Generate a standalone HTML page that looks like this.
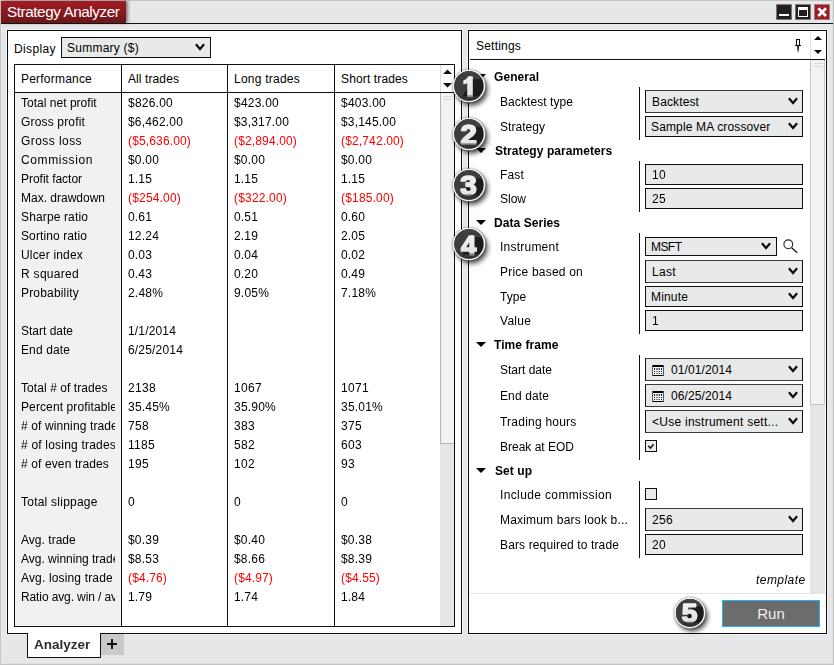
<!DOCTYPE html>
<html><head><meta charset="utf-8"><title>Strategy Analyzer</title>
<style>
*{box-sizing:border-box;margin:0;padding:0}
html,body{width:834px;height:665px;overflow:hidden}
body{position:relative;background:#e6e7e8;font-family:"Liberation Sans",sans-serif;font-size:12px;color:#000;line-height:14px}
.a{position:absolute}
.t{position:absolute;white-space:nowrap;height:14px;line-height:14px}
.b{font-weight:bold}
.r{color:#ff0000}
.g{will-change:transform}
.cb{position:absolute;background:#e8eae9;border:1px solid #0e0e0e}
.cb.s{border-top-color:#3a3a3a;border-bottom-color:#3a3a3a}
.cb span{position:absolute;left:6px;white-space:nowrap}
.vl{position:absolute;left:639px;width:1px;background:#111}
.tri{position:absolute;width:0;height:0;border-left:5px solid transparent;border-right:5px solid transparent;border-top:5px solid #000}
.chev{position:absolute;width:10px;height:8px}
.badge{position:absolute;width:33px;height:33px}
</style></head><body>

<div class="a" style="left:0;top:0;width:834px;height:1px;background:#c4c4c4"></div>
<div class="a" style="left:0;top:0;width:1px;height:665px;background:#c4c4c4"></div>
<div class="a" style="left:0;top:663px;width:834px;height:1px;background:#dcdddd"></div>
<div class="a" style="left:832px;top:0;width:1px;height:665px;background:#dedfdf"></div>
<div class="a" style="left:0;top:664px;width:834px;height:1px;background:#c5c5c5"></div>
<div class="a" style="left:833px;top:0;width:1px;height:665px;background:#c5c5c5"></div>
<div class="a" style="left:1px;top:1px;width:125px;height:22px;background:linear-gradient(#a51c24,#6a171b);box-shadow:2px 0 3px rgba(0,0,0,.45)"></div>
<div class="t" style="left:7px;top:3px;height:18px;line-height:18px;font-size:15.3px;letter-spacing:-0.44px;color:#fff">Strategy Analyzer</div>
<div class="a" style="left:1px;top:23px;width:832px;height:1px;background:#111"></div>
<div class="a" style="left:776px;top:4px;width:16px;height:16px;background:#231f20;border:1px solid #7b7b7b"></div>
<div class="a" style="left:779px;top:14px;width:10px;height:2px;background:#fff"></div>
<div class="a" style="left:795px;top:4px;width:16px;height:16px;background:#231f20;border:1px solid #7b7b7b"></div>
<div class="a" style="left:798px;top:7px;width:10px;height:10px;border:1px solid #fff;border-top-width:3px"></div>
<div class="a" style="left:814px;top:4px;width:16px;height:16px;background:#a21b20;border:1px solid #9a7f80"></div>
<svg class="a" style="left:814px;top:4px" width="16" height="16" viewBox="0 0 16 16"><path d="M4.3 4.3 L12 12 M12 4.3 L4.3 12" stroke="#fff" stroke-width="2.7" fill="none"/></svg>
<div class="a" style="left:7px;top:30px;width:455px;height:604px;background:#fff;border:1px solid #0c0c0c;box-shadow:0 0 0 1px rgba(255,255,255,.55)"></div>
<div class="t" style="left:14px;top:42px;letter-spacing:0.379px;">Display</div>
<div class="cb" style="left:61px;top:37px;width:150px;height:21px"><span style="left:5px;top:3px;line-height:14px;letter-spacing:0.242px;">Summary ($)</span></div>
<svg class="chev" style="left:195px;top:43px" viewBox="0 0 10 8"><path d="M0.9 1.2 L5 6 L9.1 1.2" stroke="#0c0c0c" stroke-width="2.2" fill="none"/></svg>
<div class="a" style="left:14px;top:64px;width:441px;height:563px;border:1px solid #111;background:#fff"></div>
<div class="a" style="left:15px;top:93px;width:106px;height:533px;background:#f0f1f1"></div>
<div class="a" style="left:15px;top:92px;width:439px;height:1px;background:#111"></div>
<div class="a" style="left:121px;top:65px;width:1px;height:561px;background:#111"></div>
<div class="a" style="left:227px;top:65px;width:1px;height:561px;background:#111"></div>
<div class="a" style="left:334px;top:65px;width:1px;height:561px;background:#111"></div>
<div class="a" style="left:440px;top:65px;width:1px;height:27px;background:#dcdcdc"></div>
<div class="a" style="left:440px;top:93px;width:14px;height:533px;background:#e6e6e6"></div>
<div class="a" style="left:440px;top:93px;width:14px;height:351px;background:#f3f3f3;border-left:1px solid #b4b4b4;border-bottom:1px solid #b4b4b4"></div>
<div class="a" style="left:443px;top:96px;width:9px;height:1px;background:#dadada"></div>
<div class="a" style="left:443px;top:99px;width:9px;height:1px;background:#dadada"></div>
<svg class="a" style="left:443px;top:69px" width="9" height="20" viewBox="0 0 9 20"><path d="M0 5 L4.5 0.5 L9 5 Z M0 14 L9 14 L4.5 18.5 Z" fill="#111"/></svg>
<div class="t" style="left:21px;top:72px;letter-spacing:0.210px;">Performance</div>
<div class="t" style="left:128px;top:72px;letter-spacing:0.098px;">All trades</div>
<div class="t" style="left:234px;top:72px;letter-spacing:0.238px;">Long trades</div>
<div class="t" style="left:341px;top:72px;letter-spacing:0.136px;">Short trades</div>
<div class="a" style="left:27px;top:633px;width:74px;height:25px;background:#fff;border:1px solid #111;border-top:none"></div>
<div class="a" style="left:101px;top:634px;width:23px;height:21px;background:#c9c9c9"></div>
<div class="a" style="left:107px;top:643px;width:10px;height:2px;background:#111"></div>
<div class="a" style="left:111px;top:639px;width:2px;height:10px;background:#111"></div>
<div class="a" style="left:468px;top:30px;width:359px;height:604px;background:#fff;border:1px solid #0c0c0c;box-shadow:0 0 0 1px rgba(255,255,255,.55)"></div>
<div class="t" style="left:476px;top:39px;letter-spacing:0.205px;">Settings</div>
<div class="a" style="left:470px;top:59px;width:355px;height:1px;background:#111"></div>
<svg class="a" style="left:794px;top:38px" width="9" height="16" viewBox="0 0 9 16"><defs><linearGradient id="png" x1="0" y1="0" x2="0" y2="1"><stop offset="0" stop-color="#000"/><stop offset="0.45" stop-color="#222"/><stop offset="1" stop-color="#000" stop-opacity="0.08"/></linearGradient></defs><rect x="2.5" y="1.5" width="3" height="6" fill="#fff" stroke="#0a0a0a" stroke-width="1"/><rect x="1" y="7" width="6" height="1" fill="#0a0a0a"/><rect x="3.3" y="8" width="1.6" height="6.8" fill="url(#png)"/></svg>
<div class="a" style="left:810px;top:31px;width:1px;height:28px;background:#e2e2e2"></div>
<svg class="a" style="left:814px;top:36px" width="8" height="18" viewBox="0 0 8 18"><path d="M0 4 L4 0 L8 4 Z M0 14 L8 14 L4 18 Z" fill="#0a0a0a"/></svg>
<div class="a" style="left:810px;top:60px;width:15px;height:533px;background:#e5e5e5"></div>
<div class="a" style="left:810px;top:60px;width:15px;height:345px;background:#f2f2f2;border:1px solid #c4c4c4;border-top:none"></div>
<div class="a" style="left:814px;top:63px;width:9px;height:1px;background:#dadada"></div>
<div class="a" style="left:814px;top:66px;width:9px;height:1px;background:#dadada"></div>
<div class="tri" style="left:475.5px;top:74px"></div>
<div class="cb s" style="left:645px;top:90px;width:158px;height:23px"><span style="left:6px;top:4px;line-height:14px;letter-spacing:0.123px;">Backtest</span></div>
<svg class="chev" style="left:788px;top:97px" viewBox="0 0 10 8"><path d="M0.9 1.2 L5 6 L9.1 1.2" stroke="#0c0c0c" stroke-width="2.2" fill="none"/></svg>
<div class="cb" style="left:645px;top:116px;width:158px;height:21px"><span style="left:5px;top:3px;line-height:14px;letter-spacing:0.144px;">Sample MA crossover</span></div>
<svg class="chev" style="left:788px;top:122px" viewBox="0 0 10 8"><path d="M0.9 1.2 L5 6 L9.1 1.2" stroke="#0c0c0c" stroke-width="2.2" fill="none"/></svg>
<div class="tri" style="left:475.5px;top:148px"></div>
<div class="cb" style="left:645px;top:164px;width:158px;height:21px"></div>
<div class="cb" style="left:645px;top:188px;width:158px;height:21px"></div>
<div class="tri" style="left:475.5px;top:220px"></div>
<div class="cb" style="left:645px;top:237px;width:132px;height:19px"><span style="left:5px;top:2px;line-height:14px;letter-spacing:-0.565px;">MSFT</span></div>
<svg class="chev" style="left:761px;top:242px" viewBox="0 0 10 8"><path d="M0.9 1.2 L5 6 L9.1 1.2" stroke="#0c0c0c" stroke-width="2.2" fill="none"/></svg>
<svg class="a" style="left:782px;top:238px" width="17" height="16" viewBox="0 0 17 16"><circle cx="6.3" cy="6.3" r="4.4" fill="none" stroke="#222" stroke-width="1.1"/><path d="M9.6 9.7 L15.2 14.7" stroke="#222" stroke-width="1.45"/></svg>
<div class="cb s" style="left:645px;top:260px;width:158px;height:23px"><span style="left:6px;top:4px;line-height:14px;letter-spacing:0.330px;">Last</span></div>
<svg class="chev" style="left:788px;top:267px" viewBox="0 0 10 8"><path d="M0.9 1.2 L5 6 L9.1 1.2" stroke="#0c0c0c" stroke-width="2.2" fill="none"/></svg>
<div class="cb" style="left:645px;top:286px;width:158px;height:21px"><span style="left:5px;top:3px;line-height:14px;letter-spacing:0.164px;">Minute</span></div>
<svg class="chev" style="left:788px;top:292px" viewBox="0 0 10 8"><path d="M0.9 1.2 L5 6 L9.1 1.2" stroke="#0c0c0c" stroke-width="2.2" fill="none"/></svg>
<div class="cb" style="left:645px;top:310px;width:158px;height:21px"></div>
<div class="tri" style="left:475.5px;top:342px"></div>
<div class="cb s" style="left:645px;top:358px;width:158px;height:23px"><span style="left:25px;top:4px;line-height:14px;letter-spacing:0.094px;">01/01/2014</span><svg style="position:absolute;left:6px;top:6px" width="12" height="11" viewBox="0 0 12 11"><rect x="0" y="0" width="12" height="11" fill="#fbfbfb"/><rect x="0" y="0" width="12" height="2" fill="#000"/><rect x="0" y="10" width="12" height="1" fill="#000"/><rect x="0" y="0" width="1" height="11" fill="#6b5340"/><rect x="11" y="0" width="1" height="11" fill="#3d5a8c"/><rect x="2.0" y="3" width="1.1" height="2" fill="#241a1a"/><rect x="4.45" y="3" width="1.1" height="2" fill="#241a1a"/><rect x="6.7" y="3" width="1.1" height="2" fill="#241a1a"/><rect x="9.0" y="3" width="1.1" height="2" fill="#241a1a"/><rect x="2.0" y="6" width="1.1" height="1" fill="#241a1a"/><rect x="4.45" y="6" width="1.1" height="1" fill="#241a1a"/><rect x="6.7" y="6" width="1.1" height="1" fill="#241a1a"/><rect x="9.0" y="6" width="1.1" height="1" fill="#241a1a"/><rect x="2.0" y="8" width="1.1" height="1" fill="#241a1a"/><rect x="4.45" y="8" width="1.1" height="1" fill="#241a1a"/><rect x="6.7" y="8" width="1.1" height="1" fill="#241a1a"/><rect x="9.0" y="8" width="1.1" height="1" fill="#241a1a"/></svg></div>
<svg class="chev" style="left:788px;top:365px" viewBox="0 0 10 8"><path d="M0.9 1.2 L5 6 L9.1 1.2" stroke="#0c0c0c" stroke-width="2.2" fill="none"/></svg>
<div class="cb s" style="left:645px;top:384px;width:158px;height:23px"><span style="left:25px;top:4px;line-height:14px;letter-spacing:0.094px;">06/25/2014</span><svg style="position:absolute;left:6px;top:6px" width="12" height="11" viewBox="0 0 12 11"><rect x="0" y="0" width="12" height="11" fill="#fbfbfb"/><rect x="0" y="0" width="12" height="2" fill="#000"/><rect x="0" y="10" width="12" height="1" fill="#000"/><rect x="0" y="0" width="1" height="11" fill="#6b5340"/><rect x="11" y="0" width="1" height="11" fill="#3d5a8c"/><rect x="2.0" y="3" width="1.1" height="2" fill="#241a1a"/><rect x="4.45" y="3" width="1.1" height="2" fill="#241a1a"/><rect x="6.7" y="3" width="1.1" height="2" fill="#241a1a"/><rect x="9.0" y="3" width="1.1" height="2" fill="#241a1a"/><rect x="2.0" y="6" width="1.1" height="1" fill="#241a1a"/><rect x="4.45" y="6" width="1.1" height="1" fill="#241a1a"/><rect x="6.7" y="6" width="1.1" height="1" fill="#241a1a"/><rect x="9.0" y="6" width="1.1" height="1" fill="#241a1a"/><rect x="2.0" y="8" width="1.1" height="1" fill="#241a1a"/><rect x="4.45" y="8" width="1.1" height="1" fill="#241a1a"/><rect x="6.7" y="8" width="1.1" height="1" fill="#241a1a"/><rect x="9.0" y="8" width="1.1" height="1" fill="#241a1a"/></svg></div>
<svg class="chev" style="left:788px;top:391px" viewBox="0 0 10 8"><path d="M0.9 1.2 L5 6 L9.1 1.2" stroke="#0c0c0c" stroke-width="2.2" fill="none"/></svg>
<div class="cb s" style="left:645px;top:410px;width:158px;height:23px"><span style="left:6px;top:4px;line-height:14px;letter-spacing:0.257px;">&lt;Use instrument sett...</span></div>
<svg class="chev" style="left:788px;top:417px" viewBox="0 0 10 8"><path d="M0.9 1.2 L5 6 L9.1 1.2" stroke="#0c0c0c" stroke-width="2.2" fill="none"/></svg>
<div class="a" style="left:645px;top:440px;width:12px;height:12px;background:#e8eae9;border:1px solid #111"></div>
<svg class="a" style="left:645px;top:440px" width="12" height="12" viewBox="0 0 12 12"><path d="M3.3 5.8 L5.4 8.1 L8.5 4.3" stroke="#111" stroke-width="1.5" fill="none"/></svg>
<div class="tri" style="left:475.5px;top:468px"></div>
<div class="a" style="left:645px;top:488px;width:12px;height:12px;background:#e8eae9;border:1px solid #111"></div>
<div class="cb s" style="left:645px;top:508px;width:158px;height:23px"><span style="left:6px;top:4px;line-height:14px;letter-spacing:0.326px;">256</span></div>
<svg class="chev" style="left:788px;top:515px" viewBox="0 0 10 8"><path d="M0.9 1.2 L5 6 L9.1 1.2" stroke="#0c0c0c" stroke-width="2.2" fill="none"/></svg>
<div class="cb" style="left:645px;top:534px;width:158px;height:21px"></div>
<div class="vl" style="top:87px;height:53px"></div>
<div class="vl" style="top:161px;height:51px"></div>
<div class="vl" style="top:233px;height:101px"></div>
<div class="vl" style="top:355px;height:105px"></div>
<div class="vl" style="top:481px;height:77px"></div>
<div class="a" style="left:469px;top:593px;width:357px;height:1px;background:#e4e4e4"></div>
<div class="a" style="left:722px;top:600px;width:98px;height:27px;background:#6c6c6c;border:1px solid #1cb8ea"></div>
<div class="t" style="left:722px;width:98px;text-align:center;top:605px;height:18px;line-height:18px;font-size:15px;color:#f0f0f0">Run</div>
<div class="g" style="position:absolute;left:0;top:0;width:834px;height:665px">
<div class="t" style="left:21px;top:96px;width:94px;overflow:hidden;letter-spacing:0.018px;">Total net profit</div>
<div class="t" style="left:128px;top:96px;letter-spacing:0.232px;">$826.00</div>
<div class="t" style="left:234px;top:96px;letter-spacing:0.232px;">$423.00</div>
<div class="t" style="left:341px;top:96px;letter-spacing:0.232px;">$403.00</div>
<div class="t" style="left:21px;top:115px;width:94px;overflow:hidden;letter-spacing:0.165px;">Gross profit</div>
<div class="t" style="left:128px;top:115px;letter-spacing:0.179px;">$6,462.00</div>
<div class="t" style="left:234px;top:115px;letter-spacing:0.179px;">$3,317.00</div>
<div class="t" style="left:341px;top:115px;letter-spacing:0.179px;">$3,145.00</div>
<div class="t" style="left:21px;top:134px;width:94px;overflow:hidden;letter-spacing:0.432px;">Gross loss</div>
<div class="t r" style="left:128px;top:134px;letter-spacing:0.148px;">($5,636.00)</div>
<div class="t r" style="left:234px;top:134px;letter-spacing:0.148px;">($2,894.00)</div>
<div class="t r" style="left:341px;top:134px;letter-spacing:0.148px;">($2,742.00)</div>
<div class="t" style="left:21px;top:153px;width:94px;overflow:hidden;letter-spacing:0.599px;">Commission</div>
<div class="t" style="left:128px;top:153px;letter-spacing:0.194px;">$0.00</div>
<div class="t" style="left:234px;top:153px;letter-spacing:0.194px;">$0.00</div>
<div class="t" style="left:341px;top:153px;letter-spacing:0.194px;">$0.00</div>
<div class="t" style="left:21px;top:172px;width:94px;overflow:hidden;letter-spacing:-0.027px;">Profit factor</div>
<div class="t" style="left:128px;top:172px;letter-spacing:0.161px;">1.15</div>
<div class="t" style="left:234px;top:172px;letter-spacing:0.161px;">1.15</div>
<div class="t" style="left:341px;top:172px;letter-spacing:0.161px;">1.15</div>
<div class="t" style="left:21px;top:191px;width:94px;overflow:hidden;">Max. drawdown</div>
<div class="t r" style="left:128px;top:191px;letter-spacing:0.181px;">($254.00)</div>
<div class="t r" style="left:234px;top:191px;letter-spacing:0.181px;">($322.00)</div>
<div class="t r" style="left:341px;top:191px;letter-spacing:0.181px;">($185.00)</div>
<div class="t" style="left:21px;top:210px;width:94px;overflow:hidden;letter-spacing:0.136px;">Sharpe ratio</div>
<div class="t" style="left:128px;top:210px;letter-spacing:0.161px;">0.61</div>
<div class="t" style="left:234px;top:210px;letter-spacing:0.161px;">0.51</div>
<div class="t" style="left:341px;top:210px;letter-spacing:0.161px;">0.60</div>
<div class="t" style="left:21px;top:229px;width:94px;overflow:hidden;letter-spacing:0.100px;">Sortino ratio</div>
<div class="t" style="left:128px;top:229px;letter-spacing:0.194px;">12.24</div>
<div class="t" style="left:234px;top:229px;letter-spacing:0.161px;">2.19</div>
<div class="t" style="left:341px;top:229px;letter-spacing:0.161px;">2.05</div>
<div class="t" style="left:21px;top:248px;width:94px;overflow:hidden;letter-spacing:0.180px;">Ulcer index</div>
<div class="t" style="left:128px;top:248px;letter-spacing:0.161px;">0.03</div>
<div class="t" style="left:234px;top:248px;letter-spacing:0.161px;">0.04</div>
<div class="t" style="left:341px;top:248px;letter-spacing:0.161px;">0.02</div>
<div class="t" style="left:21px;top:267px;width:94px;overflow:hidden;letter-spacing:0.293px;">R squared</div>
<div class="t" style="left:128px;top:267px;letter-spacing:0.161px;">0.43</div>
<div class="t" style="left:234px;top:267px;letter-spacing:0.161px;">0.20</div>
<div class="t" style="left:341px;top:267px;letter-spacing:0.161px;">0.49</div>
<div class="t" style="left:21px;top:286px;width:94px;overflow:hidden;letter-spacing:0.179px;">Probability</div>
<div class="t" style="left:128px;top:286px;letter-spacing:0.195px;">2.48%</div>
<div class="t" style="left:234px;top:286px;letter-spacing:0.195px;">9.05%</div>
<div class="t" style="left:341px;top:286px;letter-spacing:0.195px;">7.18%</div>
<div class="t" style="left:21px;top:324px;width:94px;overflow:hidden;">Start date</div>
<div class="t" style="left:128px;top:324px;letter-spacing:0.161px;">1/1/2014</div>
<div class="t" style="left:21px;top:343px;width:94px;overflow:hidden;letter-spacing:0.120px;">End date</div>
<div class="t" style="left:128px;top:343px;letter-spacing:0.179px;">6/25/2014</div>
<div class="t" style="left:21px;top:381px;width:94px;overflow:hidden;letter-spacing:0.076px;">Total # of trades</div>
<div class="t" style="left:128px;top:381px;letter-spacing:0.326px;">2138</div>
<div class="t" style="left:234px;top:381px;letter-spacing:0.326px;">1067</div>
<div class="t" style="left:341px;top:381px;letter-spacing:0.326px;">1071</div>
<div class="t" style="left:21px;top:400px;width:94px;overflow:hidden;letter-spacing:0.108px;">Percent profitable</div>
<div class="t" style="left:128px;top:400px;letter-spacing:0.217px;">35.45%</div>
<div class="t" style="left:234px;top:400px;letter-spacing:0.217px;">35.90%</div>
<div class="t" style="left:341px;top:400px;letter-spacing:0.217px;">35.01%</div>
<div class="t" style="left:21px;top:419px;width:94px;overflow:hidden;letter-spacing:0.120px;"># of winning trades</div>
<div class="t" style="left:128px;top:419px;letter-spacing:0.326px;">758</div>
<div class="t" style="left:234px;top:419px;letter-spacing:0.326px;">383</div>
<div class="t" style="left:341px;top:419px;letter-spacing:0.326px;">375</div>
<div class="t" style="left:21px;top:438px;width:94px;overflow:hidden;letter-spacing:0.201px;"># of losing trades</div>
<div class="t" style="left:128px;top:438px;letter-spacing:0.326px;">1185</div>
<div class="t" style="left:234px;top:438px;letter-spacing:0.326px;">582</div>
<div class="t" style="left:341px;top:438px;letter-spacing:0.326px;">603</div>
<div class="t" style="left:21px;top:457px;width:94px;overflow:hidden;letter-spacing:0.121px;"># of even trades</div>
<div class="t" style="left:128px;top:457px;letter-spacing:0.326px;">195</div>
<div class="t" style="left:234px;top:457px;letter-spacing:0.326px;">102</div>
<div class="t" style="left:341px;top:457px;letter-spacing:0.326px;">93</div>
<div class="t" style="left:21px;top:495px;width:94px;overflow:hidden;letter-spacing:0.235px;">Total slippage</div>
<div class="t" style="left:128px;top:495px;letter-spacing:0.326px;">0</div>
<div class="t" style="left:234px;top:495px;letter-spacing:0.326px;">0</div>
<div class="t" style="left:341px;top:495px;letter-spacing:0.326px;">0</div>
<div class="t" style="left:21px;top:533px;width:94px;overflow:hidden;letter-spacing:0.030px;">Avg. trade</div>
<div class="t" style="left:128px;top:533px;letter-spacing:0.194px;">$0.39</div>
<div class="t" style="left:234px;top:533px;letter-spacing:0.194px;">$0.40</div>
<div class="t" style="left:341px;top:533px;letter-spacing:0.194px;">$0.38</div>
<div class="t" style="left:21px;top:552px;width:94px;overflow:hidden;letter-spacing:-0.009px;">Avg. winning trade</div>
<div class="t" style="left:128px;top:552px;letter-spacing:0.194px;">$8.53</div>
<div class="t" style="left:234px;top:552px;letter-spacing:0.194px;">$8.66</div>
<div class="t" style="left:341px;top:552px;letter-spacing:0.194px;">$8.39</div>
<div class="t" style="left:21px;top:571px;width:94px;overflow:hidden;letter-spacing:0.154px;">Avg. losing trade</div>
<div class="t r" style="left:128px;top:571px;letter-spacing:0.140px;">($4.76)</div>
<div class="t r" style="left:234px;top:571px;letter-spacing:0.140px;">($4.97)</div>
<div class="t r" style="left:341px;top:571px;letter-spacing:0.140px;">($4.55)</div>
<div class="t" style="left:21px;top:590px;width:94px;overflow:hidden;letter-spacing:-0.113px;">Ratio avg. win / avg. loss</div>
<div class="t" style="left:128px;top:590px;letter-spacing:0.161px;">1.79</div>
<div class="t" style="left:234px;top:590px;letter-spacing:0.161px;">1.74</div>
<div class="t" style="left:341px;top:590px;letter-spacing:0.161px;">1.84</div>
<div class="t b" style="left:34px;top:637px;height:16px;line-height:16px;font-size:13.5px;color:#2e2e2e">Analyzer</div>
<div class="t b" style="left:494px;top:70px;letter-spacing:0.06px">General</div>
<div class="t" style="left:500px;top:95px;letter-spacing:0.074px;">Backtest type</div>
<div class="t" style="left:500px;top:120px;letter-spacing:0.039px;">Strategy</div>
<div class="t b" style="left:495px;top:144px;letter-spacing:0.06px">Strategy parameters</div>
<div class="t" style="left:500px;top:168px;letter-spacing:0.166px;">Fast</div>
<div class="t" style="left:652px;top:168px;letter-spacing:0.326px;">10</div>
<div class="t" style="left:500px;top:192px;">Slow</div>
<div class="t" style="left:652px;top:192px;letter-spacing:0.326px;">25</div>
<div class="t b" style="left:494px;top:216px;letter-spacing:0.06px">Data Series</div>
<div class="t" style="left:500px;top:240px;letter-spacing:0.231px;">Instrument</div>
<div class="t" style="left:500px;top:265px;letter-spacing:0.211px;">Price based on</div>
<div class="t" style="left:500px;top:290px;letter-spacing:0.081px;">Type</div>
<div class="t" style="left:500px;top:314px;letter-spacing:0.262px;">Value</div>
<div class="t" style="left:652px;top:314px;letter-spacing:0.326px;">1</div>
<div class="t b" style="left:494px;top:338px;letter-spacing:0.06px">Time frame</div>
<div class="t" style="left:500px;top:363px;">Start date</div>
<div class="t" style="left:500px;top:389px;letter-spacing:0.120px;">End date</div>
<div class="t" style="left:500px;top:415px;letter-spacing:0.228px;">Trading hours</div>
<div class="t" style="left:500px;top:440px;">Break at EOD</div>
<div class="t b" style="left:495px;top:464px;letter-spacing:0.06px">Set up</div>
<div class="t" style="left:500px;top:488px;letter-spacing:0.368px;">Include commission</div>
<div class="t" style="left:500px;top:513px;letter-spacing:0.180px;">Maximum bars look b...</div>
<div class="t" style="left:500px;top:538px;letter-spacing:0.134px;">Bars required to trade</div>
<div class="t" style="left:652px;top:538px;letter-spacing:0.326px;">20</div>
<div class="t" style="left:756px;top:573px;font-style:italic;letter-spacing:0.45px">template</div>
</div>
<svg width="0" height="0" style="position:absolute"><defs>
<filter id="bsh" x="-50%" y="-50%" width="200%" height="200%"><feGaussianBlur stdDeviation="2.6"/></filter>
<clipPath id="bcp"><circle cx="22" cy="22" r="14.7"/></clipPath>
<filter id="bsh2" x="-50%" y="-50%" width="200%" height="200%"><feGaussianBlur stdDeviation="0.9"/></filter>
<linearGradient id="bdg" gradientUnits="userSpaceOnUse" x1="0" y1="11" x2="0" y2="34"><stop offset="0" stop-color="#f2f2f2"/><stop offset="0.86" stop-color="#e4e4e4"/><stop offset="0.9" stop-color="#8c8c8c"/><stop offset="1" stop-color="#7a7a7a"/></linearGradient>
<linearGradient id="bbg" x1="0" y1="0" x2="0" y2="1"><stop offset="0" stop-color="#333"/><stop offset="1" stop-color="#161616"/></linearGradient>
</defs></svg>
<svg class="a" style="left:446.60px;top:64.30px" width="52.00" height="52.00" viewBox="0 0 52 52">
<circle cx="24.6" cy="25.4" r="16.0" fill="#000" opacity=".72" filter="url(#bsh)"/>
<circle cx="22" cy="22" r="16.6" fill="#000" opacity=".4" filter="url(#bsh2)"/>
<circle cx="22" cy="22" r="16.3" fill="#f6f6f6"/>
<circle cx="22" cy="22" r="14.7" fill="#1c1c1c"/>
<g clip-path="url(#bcp)"><path d="M0 0 H40 V15.2 H25.5 L11 40 H0 Z" fill="#3e3e3e"/><path d="M0 0 H40 V9 H0 Z" fill="#464646"/><path d="M0 40 H44 V33.5 Q22 30.5 0 33.5 Z" fill="#3a3a3a" opacity=".8"/></g>
<path d="M21.3 12.2 H25.8 V33.3 H20.2 V19.3 L16.3 20.5 V16.6 Q19.9 15.4 21.3 12.2 Z" fill="url(#bdg)"/>
</svg>
<svg class="a" style="left:446.60px;top:111.50px" width="52.00" height="52.00" viewBox="0 0 52 52">
<circle cx="24.6" cy="25.4" r="16.0" fill="#000" opacity=".72" filter="url(#bsh)"/>
<circle cx="22" cy="22" r="16.6" fill="#000" opacity=".4" filter="url(#bsh2)"/>
<circle cx="22" cy="22" r="16.3" fill="#f6f6f6"/>
<circle cx="22" cy="22" r="14.7" fill="#1c1c1c"/>
<g clip-path="url(#bcp)"><path d="M0 0 H40 V15.2 H25.5 L11 40 H0 Z" fill="#3e3e3e"/><path d="M0 0 H40 V9 H0 Z" fill="#464646"/><path d="M0 40 H44 V33.5 Q22 30.5 0 33.5 Z" fill="#3a3a3a" opacity=".8"/></g>
<text x="21.6" y="31.9" text-anchor="middle" transform="translate(21.6 0) scale(1.07 1) translate(-21.6 0)" style="font-family:'Liberation Sans',sans-serif;font-weight:bold;font-size:27.5px" fill="url(#bdg)" stroke="url(#bdg)" stroke-width="1.7" stroke-linejoin="round">2</text>
</svg>
<svg class="a" style="left:446.60px;top:163.00px" width="52.00" height="52.00" viewBox="0 0 52 52">
<circle cx="24.6" cy="25.4" r="16.0" fill="#000" opacity=".72" filter="url(#bsh)"/>
<circle cx="22" cy="22" r="16.6" fill="#000" opacity=".4" filter="url(#bsh2)"/>
<circle cx="22" cy="22" r="16.3" fill="#f6f6f6"/>
<circle cx="22" cy="22" r="14.7" fill="#1c1c1c"/>
<g clip-path="url(#bcp)"><path d="M0 0 H40 V15.2 H25.5 L11 40 H0 Z" fill="#3e3e3e"/><path d="M0 0 H40 V9 H0 Z" fill="#464646"/><path d="M0 40 H44 V33.5 Q22 30.5 0 33.5 Z" fill="#3a3a3a" opacity=".8"/></g>
<text x="21.6" y="31.9" text-anchor="middle" transform="translate(21.6 0) scale(1.08 1) translate(-21.6 0)" style="font-family:'Liberation Sans',sans-serif;font-weight:bold;font-size:27.5px" fill="url(#bdg)" stroke="url(#bdg)" stroke-width="1.7" stroke-linejoin="round">3</text>
</svg>
<svg class="a" style="left:446.60px;top:222.00px" width="52.00" height="52.00" viewBox="0 0 52 52">
<circle cx="24.6" cy="25.4" r="16.0" fill="#000" opacity=".72" filter="url(#bsh)"/>
<circle cx="22" cy="22" r="16.6" fill="#000" opacity=".4" filter="url(#bsh2)"/>
<circle cx="22" cy="22" r="16.3" fill="#f6f6f6"/>
<circle cx="22" cy="22" r="14.7" fill="#1c1c1c"/>
<g clip-path="url(#bcp)"><path d="M0 0 H40 V15.2 H25.5 L11 40 H0 Z" fill="#3e3e3e"/><path d="M0 0 H40 V9 H0 Z" fill="#464646"/><path d="M0 40 H44 V33.5 Q22 30.5 0 33.5 Z" fill="#3a3a3a" opacity=".8"/></g>
<text x="21.6" y="32.6" text-anchor="middle" transform="translate(21.6 0) scale(0.97 1) translate(-21.6 0)" style="font-family:'Liberation Sans',sans-serif;font-weight:bold;font-size:28.5px" fill="url(#bdg)" stroke="url(#bdg)" stroke-width="1.7" stroke-linejoin="round">4</text>
</svg>
<svg class="a" style="left:668.70px;top:592.00px" width="49.40" height="49.40" viewBox="0 0 52 52">
<circle cx="24.6" cy="25.4" r="16.0" fill="#000" opacity=".72" filter="url(#bsh)"/>
<circle cx="22" cy="22" r="16.6" fill="#000" opacity=".4" filter="url(#bsh2)"/>
<circle cx="22" cy="22" r="16.3" fill="#f6f6f6"/>
<circle cx="22" cy="22" r="14.7" fill="#1c1c1c"/>
<g clip-path="url(#bcp)"><path d="M0 0 H40 V15.2 H25.5 L11 40 H0 Z" fill="#3e3e3e"/><path d="M0 0 H40 V9 H0 Z" fill="#464646"/><path d="M0 40 H44 V33.5 Q22 30.5 0 33.5 Z" fill="#3a3a3a" opacity=".8"/></g>
<text x="21.6" y="31.9" text-anchor="middle" transform="translate(21.6 0) scale(1.08 1) translate(-21.6 0)" style="font-family:'Liberation Sans',sans-serif;font-weight:bold;font-size:27.5px" fill="url(#bdg)" stroke="url(#bdg)" stroke-width="1.7" stroke-linejoin="round">5</text>
</svg>
</body></html>
